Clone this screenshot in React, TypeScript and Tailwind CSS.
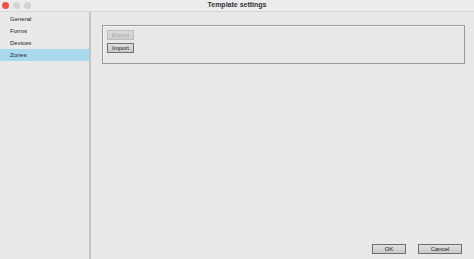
import React, { useState } from 'react';

const sections = ['General', 'Forms', 'Devices', 'Zones'];

function MacButton({ label, disabled, className }: { label: string; disabled?: boolean; className?: string }) {
  return (
    <button
      disabled={disabled}
      className={`h-[10px] flex items-center justify-center border text-[6px] leading-none bg-gradient-to-b ${
        disabled
          ? 'border-[#bdbdbd] from-[#d9d9d9] to-[#cfcfcf] text-[#a8a8a8]'
          : 'border-[#6f6f6f] from-[#e0e0e0] to-[#c9c9c9] text-[#222]'
      } ${className ?? ''}`}
    >
      {label}
    </button>
  );
}

export default function App() {
  const [active, setActive] = useState('Zones');

  return (
    <div
      className="w-[474px] h-[259px] flex flex-col bg-[#e8e8e8] overflow-hidden"
      style={{ fontFamily: '"Liberation Sans", Arial, sans-serif' }}
    >
      {/* Title bar */}
      <div className="relative h-[12px] flex items-center justify-center bg-[#ececec] border-b border-[#d6d6d6]">
        <div className="absolute left-[2px] top-[2px] flex gap-[4px]">
          <span className="w-[7px] h-[7px] rounded-full bg-[#f0504c]" />
          <span className="w-[7px] h-[7px] rounded-full bg-[#d3d3d3]" />
          <span className="w-[7px] h-[7px] rounded-full bg-[#d3d3d3]" />
        </div>
        <span className="text-[7px] font-bold text-[#333]">Template settings</span>
      </div>

      <div className="flex-1 flex min-h-0">
        {/* Sidebar */}
        <div className="w-[91px] flex flex-col bg-[#e9e9e9] border-r-2 border-[#c4c4c4]">
          <div className="h-[1px]" />
          {sections.map((s) => (
            <div
              key={s}
              onClick={() => setActive(s)}
              className={`h-[12px] flex items-center pl-[10px] text-[6px] text-[#222] ${
                active === s ? 'bg-[#a8d9ee]' : ''
              }`}
            >
              {s}
            </div>
          ))}
        </div>

        {/* Content */}
        <div className="flex-1 flex flex-col pl-[11px] pr-[9px] pt-[13px] pb-[5px]">
          <div className="h-[39px] border border-[#9a9a9a] shadow-[inset_1px_1px_0_#f4f4f4] flex flex-col gap-[3px] pl-[4px] pt-[4px]">
            <MacButton label="Export" disabled className="w-[27px]" />
            <MacButton label="Import" className="w-[27px]" />
          </div>
          <div className="flex-1" />
          <div className="flex justify-end gap-[12px] pr-[3px]">
            <MacButton label="OK" className="w-[34px]" />
            <MacButton label="Cancel" className="w-[44px]" />
          </div>
        </div>
      </div>
    </div>
  );
}
